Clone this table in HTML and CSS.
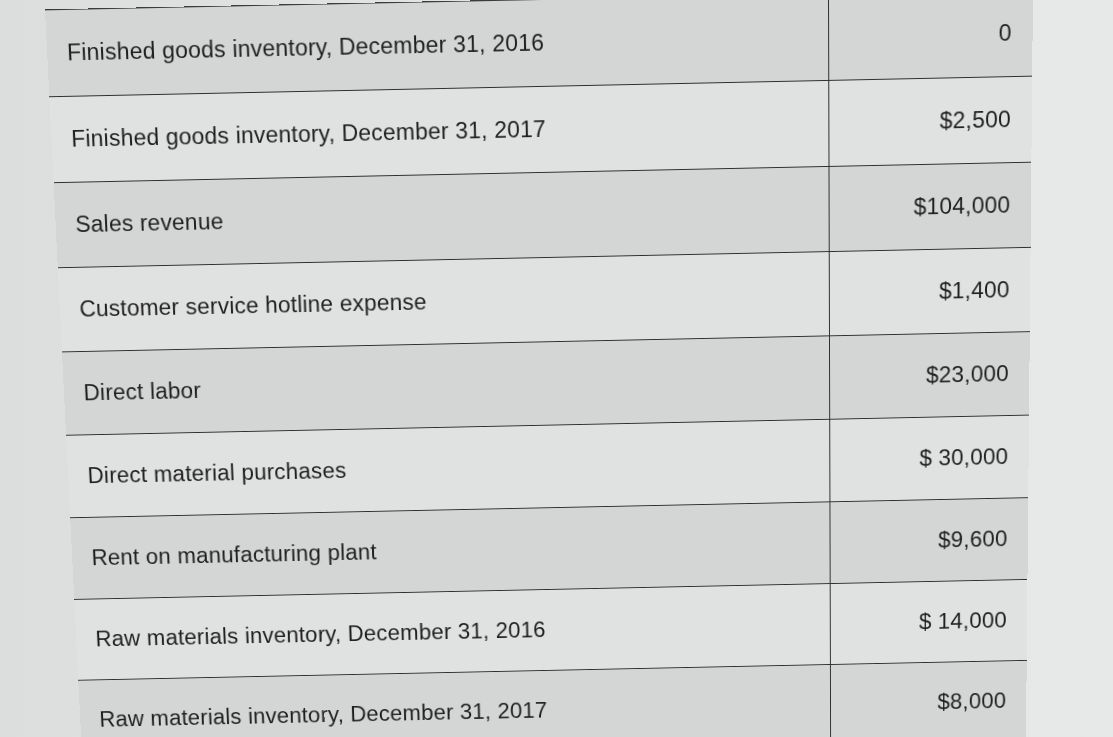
FILE: index.html
```html
<!DOCTYPE html>
<html lang="en">
<head>
<meta charset="utf-8">
<title>Cost data</title>
<link rel="stylesheet" href="styles.css">
</head>
<body>
<div class="screen">
  <div class="sheet">
    <div class="row dark"><div class="label">Finished goods inventory, December 31, 2016</div><div class="value">0</div></div>
    <div class="row light"><div class="label">Finished goods inventory, December 31, 2017</div><div class="value">$2,500</div></div>
    <div class="row dark"><div class="label">Sales revenue</div><div class="value">$104,000</div></div>
    <div class="row light"><div class="label">Customer service hotline expense</div><div class="value">$1,400</div></div>
    <div class="row dark"><div class="label">Direct labor</div><div class="value">$23,000</div></div>
    <div class="row light"><div class="label">Direct material purchases</div><div class="value">$ 30,000</div></div>
    <div class="row dark"><div class="label">Rent on manufacturing plant</div><div class="value">$9,600</div></div>
    <div class="row light"><div class="label">Raw materials inventory, December 31, 2016</div><div class="value">$ 14,000</div></div>
    <div class="row dark"><div class="label">Raw materials inventory, December 31, 2017</div><div class="value">$8,000</div></div>
  </div>
</div>
</body>
</html>
```

FILE: styles.css
```css
html, body {
  margin: 0;
  padding: 0;
  height: 100%;
  overflow: hidden;
}

body {
  background: linear-gradient(90deg, #dcdddd 0%, #e2e3e3 40%, #e7e8e8 100%);
  font-family: "Liberation Sans", Arial, sans-serif;
  color: #1f1f1f;
}

.screen {
  padding-left: 45px;
}

.sheet {
  width: 988px;
  border-top: 1px solid #3c3c3c;
  transform-origin: 831px 0;
  transform: translateY(-8px) skewY(-1.2deg) perspective(2000px) rotateX(-6.8deg);
}

.row {
  display: flex;
  height: 88px;
  box-sizing: border-box;
  border-bottom: 1px solid #2e2e2e;
  font-size: 23px;
  letter-spacing: 0.22px;
}

.row.dark { background: #d4d6d6; }
.row.light { background: #e0e1e1; }

.label {
  width: 783px;
  display: flex;
  align-items: center;
  padding-left: 20px;
  box-sizing: border-box;
}

.value {
  flex: 1;
  display: flex;
  align-items: center;
  justify-content: flex-end;
  padding-right: 21px;
  border-left: 1px solid #2e2e2e;
}
```
